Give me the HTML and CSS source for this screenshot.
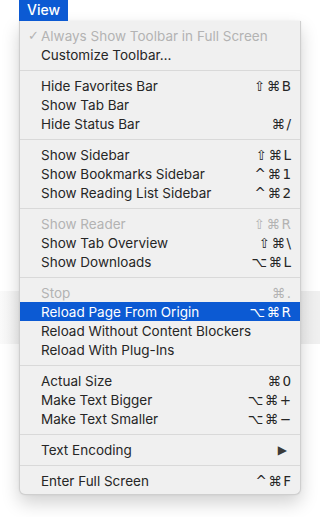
FILE: index.html
```html
<!DOCTYPE html>
<html>
<head>
<meta charset="utf-8">
<link rel="stylesheet" href="styles.css">
</head>
<body>
<div class="page">
  <div class="backdrop"></div>
  <div class="menubar-item">View</div>
  <div class="menu">
    <div class="row disabled"><span class="mark">✓</span><span class="label">Always Show Toolbar in Full Screen</span></div>
    <div class="row"><span class="mark"></span><span class="label">Customize Toolbar…</span></div>
    <div class="sep"></div>
    <div class="row"><span class="mark"></span><span class="label">Hide Favorites Bar</span><span class="key">⇧⌘B</span></div>
    <div class="row"><span class="mark"></span><span class="label">Show Tab Bar</span></div>
    <div class="row"><span class="mark"></span><span class="label">Hide Status Bar</span><span class="key">⌘/</span></div>
    <div class="sep"></div>
    <div class="row"><span class="mark"></span><span class="label">Show Sidebar</span><span class="key">⇧⌘L</span></div>
    <div class="row"><span class="mark"></span><span class="label">Show Bookmarks Sidebar</span><span class="key">^⌘1</span></div>
    <div class="row"><span class="mark"></span><span class="label">Show Reading List Sidebar</span><span class="key">^⌘2</span></div>
    <div class="sep"></div>
    <div class="row disabled"><span class="mark"></span><span class="label">Show Reader</span><span class="key">⇧⌘R</span></div>
    <div class="row"><span class="mark"></span><span class="label">Show Tab Overview</span><span class="key">⇧⌘\</span></div>
    <div class="row"><span class="mark"></span><span class="label">Show Downloads</span><span class="key">⌥⌘L</span></div>
    <div class="sep"></div>
    <div class="row disabled"><span class="mark"></span><span class="label">Stop</span><span class="key">⌘.</span></div>
    <div class="row selected"><span class="mark"></span><span class="label">Reload Page From Origin</span><span class="key">⌥⌘R</span></div>
    <div class="row"><span class="mark"></span><span class="label">Reload Without Content Blockers</span></div>
    <div class="row"><span class="mark"></span><span class="label">Reload With Plug-Ins</span></div>
    <div class="sep"></div>
    <div class="row"><span class="mark"></span><span class="label">Actual Size</span><span class="key">⌘0</span></div>
    <div class="row"><span class="mark"></span><span class="label">Make Text Bigger</span><span class="key">⌥⌘+</span></div>
    <div class="row"><span class="mark"></span><span class="label">Make Text Smaller</span><span class="key">⌥⌘−</span></div>
    <div class="sep"></div>
    <div class="row"><span class="mark"></span><span class="label">Text Encoding</span><span class="arrow">▶</span></div>
    <div class="sep"></div>
    <div class="row"><span class="mark"></span><span class="label">Enter Full Screen</span><span class="key">^⌘F</span></div>
  </div>
</div>
</body>
</html>
```
FILE: styles.css
```css
html, body {
  margin: 0;
  padding: 0;
  background: #ffffff;
}
.page {
  position: relative;
  width: 320px;
  height: 517px;
  overflow: hidden;
  font-family: Inter, "Liberation Sans", "DejaVu Sans", sans-serif;
}
.backdrop {
  position: absolute;
  left: 0;
  top: 291px;
  width: 320px;
  height: 53px;
  background: linear-gradient(to right, #fafafa 0px, #f3f3f3 18px, #f0f0f0 100%);
  z-index: 0;
}
.menubar-item {
  position: relative;
  z-index: 2;
  margin-left: 19px;
  width: 49px;
  height: 21px;
  background: #0c5ad3;
  color: #ffffff;
  font-size: 14px;
  font-weight: 500;
  line-height: 20px;
  text-align: center;
}
.menu {
  position: relative;
  z-index: 1;
  margin-left: 19px;
  width: 280px;
  padding: 5px 0 4px;
  background: #f0f0f0;
  border: 1px solid #cfcfcf;
  border-top: none;
  border-radius: 0 0 6px 6px;
  box-shadow: 0 8px 18px rgba(0, 0, 0, 0.18), 0 0 2px rgba(0, 0, 0, 0.08);
  color: #262626;
  font-size: 13.5px;
}
.row {
  display: flex;
  align-items: center;
  height: 19px;
  padding: 0 9px 0 8px;
  white-space: nowrap;
}
.mark {
  flex: none;
  width: 13px;
  font-size: 13px;
  font-family: "DejaVu Sans", sans-serif;
}
.label {
  flex: 1;
}
.key {
  flex: none;
  font-family: "DejaVu Sans", sans-serif;
  font-size: 13.5px;
  letter-spacing: 1.5px;
  margin-right: -1.5px;
}
.arrow {
  flex: none;
  font-size: 12px;
  color: #3a3a3a;
  margin-right: 4px;
  font-family: "DejaVu Sans", sans-serif;
}
.disabled {
  color: #b3b3b3;
}
.selected {
  background: #0c5ad3;
  color: #ffffff;
}
.sep {
  height: 12px;
  display: flex;
  align-items: center;
}
.sep::before {
  content: "";
  display: block;
  width: 100%;
  height: 1px;
  background: #d9d9d9;
}
```
